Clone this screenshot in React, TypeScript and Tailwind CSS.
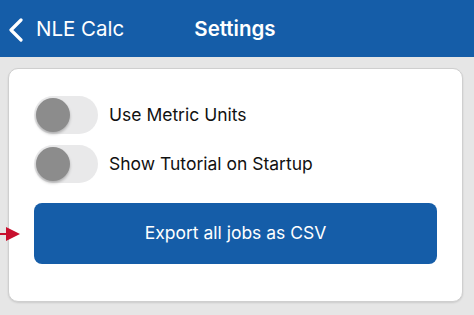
import React from 'react'

function Toggle() {
  return (
    <div className="relative w-[64px] h-[38px] rounded-full bg-[#e9e9ea] shrink-0">
      <div className="absolute left-[2px] top-[2px] w-[34px] h-[34px] rounded-full bg-[#8c8c8c] shadow-[0_2px_3px_rgba(0,0,0,0.25)]" />
    </div>
  )
}

export default function App() {
  return (
    <div className="relative w-[474px] h-[315px] bg-[#e6e6e6] overflow-hidden" style={{ fontFamily: 'Inter, "Liberation Sans", sans-serif' }}>
      <header className="h-[57px] bg-[#155da8] flex items-center text-white">
        <svg width="16" height="24" viewBox="0 0 16 24" className="ml-[8px] mt-[2px]">
          <path d="M13 2 L3 12 L13 22" fill="none" stroke="white" strokeWidth="3.2" strokeLinecap="round" strokeLinejoin="round" />
        </svg>
        <span className="ml-[12px] mt-[2px] text-[20.5px] leading-none">NLE Calc</span>
        <span className="ml-[70px] mt-[2px] text-[20.5px] font-semibold leading-none">Settings</span>
      </header>

      <div className="ml-[8px] mr-[11px] mt-[11px] h-[234px] bg-white rounded-[10px] border border-[#cfcfcf] shadow-[0_1px_2px_rgba(0,0,0,0.12)] pl-[25px] pr-[25px] pt-[27px]">
        <div className="flex flex-col gap-[11px]">
          <div className="flex items-center gap-[11px]">
            <Toggle />
            <span className="text-[17.5px] text-[#111]">Use Metric Units</span>
          </div>
          <div className="flex items-center gap-[11px]">
            <Toggle />
            <span className="text-[17.5px] text-[#111]">Show Tutorial on Startup</span>
          </div>
        </div>
        <button className="mt-[20px] w-full h-[61px] rounded-[8px] bg-[#155da8] text-white text-[17.5px]">
          Export all jobs as CSV
        </button>
      </div>

      <svg className="absolute left-0 top-[226px]" width="22" height="16" viewBox="0 0 22 16">
        <line x1="0" y1="8" x2="8" y2="8" stroke="#c8102e" strokeWidth="2" />
        <polygon points="6,1 20,8 6,15" fill="#c8102e" />
      </svg>
    </div>
  )
}
